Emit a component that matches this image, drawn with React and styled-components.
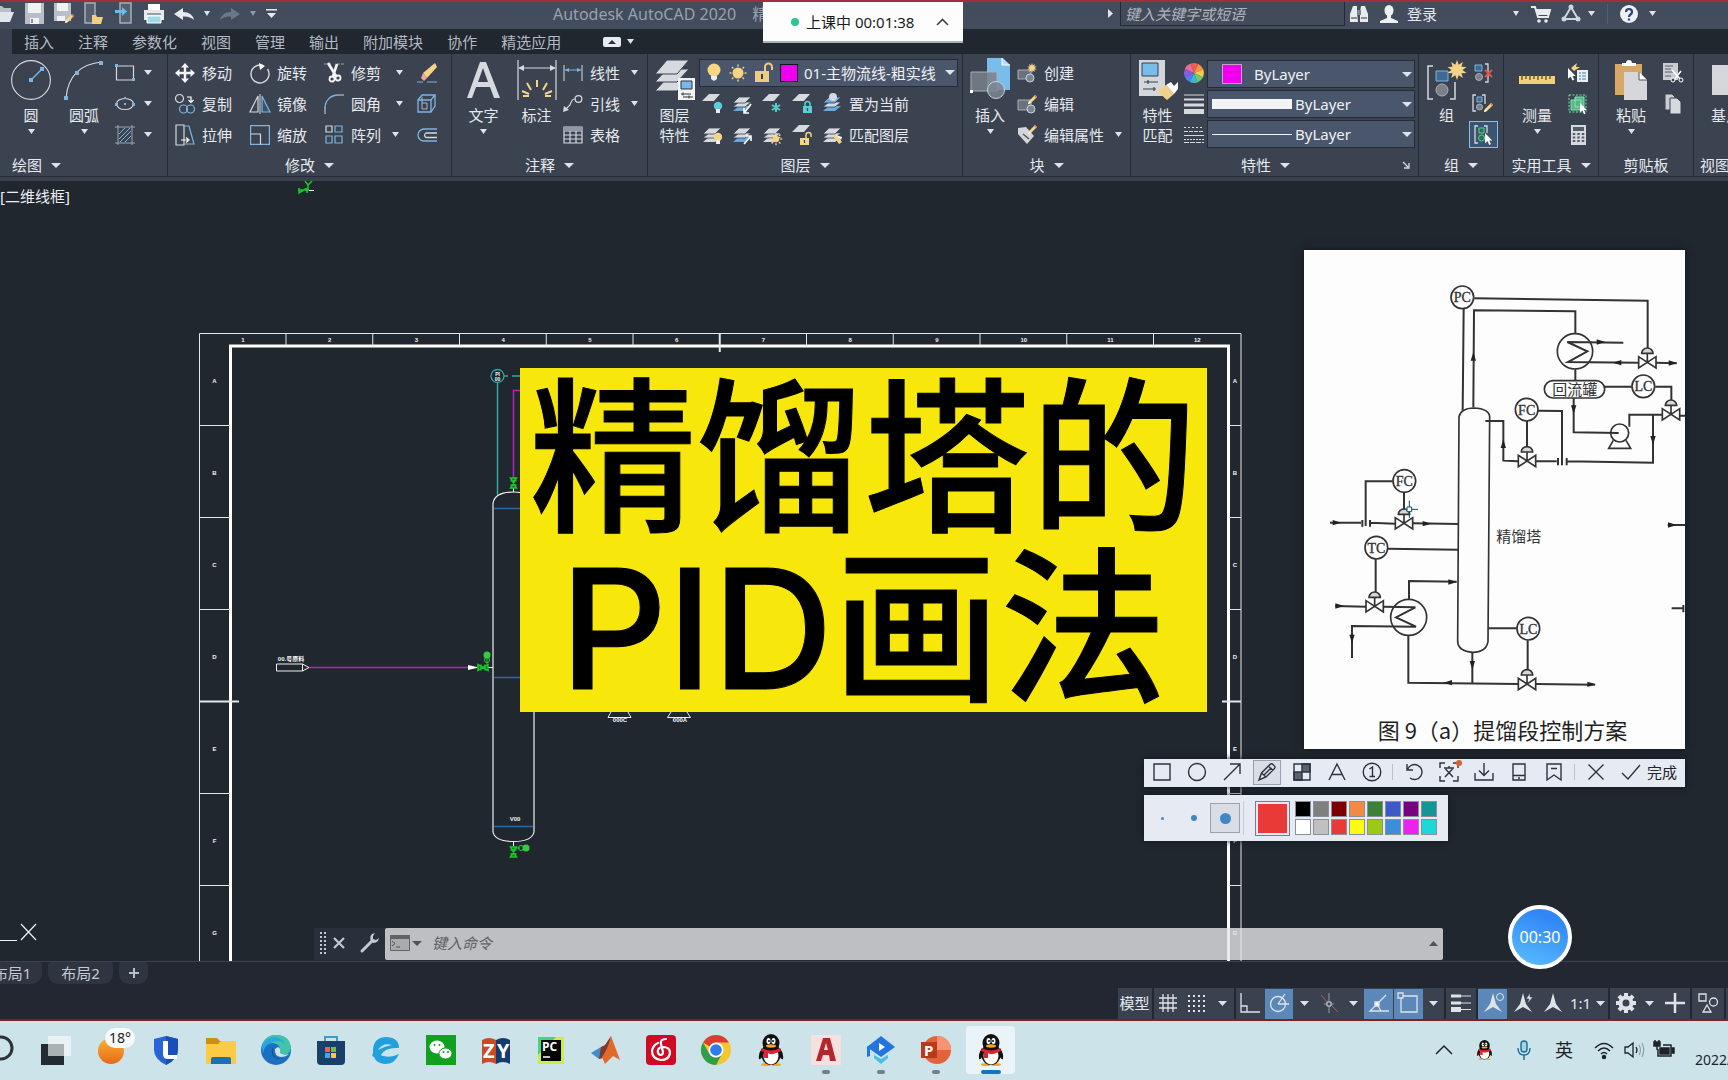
import React from "react";
import styled, { createGlobalStyle, css } from "styled-components";

const FONT = '"Noto Sans", "Noto Sans CJK SC", sans-serif';

const Global = createGlobalStyle`
  *, *::before, *::after { box-sizing: border-box; }
  body { margin: 0; background: #20272e; overflow: hidden; }
  button, input, select { font: inherit; color: inherit; margin: 0; }
  button { border: 0; padding: 0; background: none; cursor: pointer; }
  svg { display: block; flex: none; overflow: visible; }
`;

/* ---------- shell ---------- */

const Shell = styled.div`
  position: relative;
  display: flex;
  flex-direction: column;
  height: 100vh;
  overflow: hidden;
  font-family: ${FONT};
  font-size: 15px;
  line-height: 20px;
  color: #e6e9ee;
  white-space: nowrap;
`;

const Icon = ({ w = 20, h = 20, box, children, ...rest }) => (
  <svg width={w} height={h} viewBox={box || `0 0 ${w} ${h}`} fill="none" aria-hidden="true" {...rest}>
    {children}
  </svg>
);

const Caret = ({ w = 7, fill = "#dfe3ea", up }) => (
  <Icon w={w} h={5} box="0 0 8 5" preserveAspectRatio="none">
    <path d={up ? "M0 5H8L4 0Z" : "M0 0H8L4 5Z"} fill={fill} />
  </Icon>
);

/* ---------- title bar ---------- */

const TitleBar = styled.header`
  display: flex;
  align-items: center;
  flex: none;
  height: 29px;
  padding-bottom: 4px;
  border-top: 2px solid #9e2f3c;
  background: linear-gradient(#434b5c, #424d5e);
  overflow: hidden;
`;

const QuickAccess = styled.div`
  display: flex;
  align-items: center;
  gap: 10px;
  margin-left: -6px;
  button { display: flex; }
`;

const DocTitle = styled.div`
  flex: 1;
  display: flex;
  gap: 16px;
  padding-left: 276px;
  font-size: 16px;
  color: #99a1ae;
  overflow: hidden;
`;

const TitleTools = styled.div`
  display: flex;
  align-items: center;
  padding-right: 72px;
`;

const Tool = styled.button`
  display: flex;
  align-items: center;
  gap: 8px;
  margin-left: ${(p) => p.$gap || 0}px;
`;

const Search = styled.input`
  width: 225px;
  height: 25px;
  margin-left: 7px;
  padding: 0 4px;
  border: 1px solid #232a34;
  background: #434b5a;
  font-style: italic;
  outline: 0;
  &::placeholder { color: #aeb4bf; opacity: 1; }
`;

const Rule = styled.span`
  width: 1px;
  height: ${(p) => p.$h}px;
  margin-left: ${(p) => p.$gap || 0}px;
  background: ${(p) => p.$color};
`;

const ClassTimer = styled.button`
  position: absolute;
  z-index: 5;
  top: 1px;
  left: calc(50% - 101px);
  display: flex;
  align-items: center;
  width: 200px;
  height: 42px;
  padding: 0 14px 0 28px;
  border-top: 1px solid #c9201d;
  border-bottom: 2px solid #a9b1b8;
  background: #fdfdfd;
  color: #1c1c1c;
  svg { margin-left: auto; }
`;

const LiveDot = styled.span`
  width: 8px;
  height: 8px;
  margin-right: 7px;
  border-radius: 50%;
  background: #2fc48d;
`;

/* ---------- ribbon ---------- */

const TabBar = styled.nav`
  display: flex;
  align-items: stretch;
  flex: none;
  height: 25px;
  background: #20272f;
`;

const Tab = styled.button`
  padding: 0 12px;
  color: #b3bac3;
  ${(p) => p.$active && css`
    margin-left: -42px;
    background: #3b4350;
  `}
`;

const RibbonToggle = styled.button`
  display: flex;
  align-items: center;
  gap: 6px;
  margin-left: 30px;
`;

const Ribbon = styled.section`
  display: flex;
  flex: none;
  height: 127px;
  background: #3b4350;
  border-bottom: 4px solid #3a404e;
  overflow: hidden;
`;

const PanelBox = styled.div`
  flex: none;
  display: flex;
  flex-direction: column;
  width: ${(p) => p.$w}px;
  border-right: 1px solid #262d38;
  border-bottom: 1px solid #262d38;
`;

const PanelBody = styled.div`
  display: flex;
  height: 97px;
  padding: 3px 0 0 ${(p) => p.$pad}px;
`;

const PanelTitle = styled.div`
  display: flex;
  align-items: center;
  justify-content: ${(p) => (p.$start ? "flex-start" : "center")};
  flex: 1;
  gap: 9px;
  padding: 3px 0 0 ${(p) => p.$start || 0}px;
  button { margin: 0 8px 0 auto; }
`;

const Panel = ({ w, pad = 0, title, start, caret = true, launcher, children }) => (
  <PanelBox $w={w}>
    <PanelBody $pad={pad}>{children}</PanelBody>
    <PanelTitle $start={start}>
      {title}
      {caret && <Caret w={10} />}
      {launcher}
    </PanelTitle>
  </PanelBox>
);

const BigTool = styled.button`
  display: flex;
  flex: none;
  flex-direction: column;
  align-items: center;
  width: ${(p) => p.$w}px;
  margin-left: ${(p) => p.$shift || 0}px;
  padding-top: 3px;
  line-height: 20px;
  svg + span { margin-top: 5px; }
  span + svg { margin-top: 4px; }
`;

const Stack = styled.div`
  display: grid;
  flex: none;
  grid-template-rows: repeat(3, 31px);
  align-items: center;
  align-content: start;
  width: ${(p) => p.$w || "auto"};
`;

const RowTool = styled.button`
  display: flex;
  align-items: center;
  gap: 7px;
  > span + svg { margin-left: ${(p) => p.$far || 4}px; }
`;

const ToolRow = styled.div`
  display: flex;
  align-items: center;
  gap: 10px;
  padding-left: 3px;
  button { display: flex; align-items: center; gap: 7px; }
`;

const PickedTool = styled.button`
  display: flex;
  align-items: center;
  justify-content: center;
  width: 29px;
  height: 27px;
  margin-left: -5px;
  border: 1px solid #86bfec;
  background: #3c5470;
`;

const Combo = styled.label`
  display: flex;
  align-items: center;
  gap: ${(p) => p.$gap || 8}px;
  width: ${(p) => p.$w}px;
  height: 28px;
  padding: 0 2px 0 ${(p) => p.$pad || 6}px;
  border: 1px solid #252c38;
  background: #4a566b;
`;

const Select = styled.select`
  flex: 1;
  min-width: 0;
  padding: 0;
  border: 0;
  outline: 0;
  appearance: none;
  background: transparent;
  color: #eef1f5;
`;

const ColorChip = styled.span`
  flex: none;
  width: ${(p) => p.$s}px;
  height: ${(p) => p.$s}px;
  border: 1px solid ${(p) => p.$edge};
  background: #ef00ef;
`;

const LineSample = styled.span`
  flex: none;
  width: 80px;
  height: ${(p) => p.$h}px;
  background: #f4f4f7;
`;

const ComboStack = styled.div`
  display: flex;
  flex-direction: column;
  gap: 2px;
  padding: 3px 0 0 3px;
`;

const B = "#7fb4e2";
const G = "#d6d9de";
const Y = "#f5d488";

/* ----- ribbon glyphs ----- */

const sheets = (c1 = G, c2 = G, c3 = G) => (
  <>
    <path d="M7 12H19L13 17H1Z" fill={c3} />
    <path d="M7 8H19L13 13H1Z" fill={c2} stroke="#3b4350" strokeWidth=".8" />
    <path d="M7 3H19L13 9H1Z" fill={c1} stroke="#3b4350" strokeWidth=".8" />
  </>
);
const oneSheet = <path d="M7 0H18L12 7H0Z" fill={G} />;
const bulb = (x, y, c) => (
  <>
    <circle cx={x} cy={y} r="4.2" fill={c} />
    <path d={`M${x - 2} ${y + 3}H${x + 2}V${y + 7}H${x - 2}Z`} fill="#eee" />
  </>
);
const padlock = (x, y, c, open) => (
  <>
    <path
      d={open ? `M${x + 6} ${y + 4}V${y + 1}A2.5 2.5 0 0 1 ${x + 11} ${y + 1}V${y + 3}` : `M${x + 2} ${y + 5}V${y + 2}A2.5 2.5 0 0 1 ${x + 7} ${y + 2}V${y + 5}`}
      stroke={c}
      strokeWidth="1.5"
    />
    <path d={`M${x} ${y + 4}H${x + 9}V${y + 11}H${x}Z`} fill={c} />
    <path d={`M${x + 4.5} ${y + 6}V${y + 9}`} stroke="#3b4350" strokeWidth="1.2" />
  </>
);
const sun = (x, y, r) => (
  <>
    <circle cx={x} cy={y} r={r} fill={Y} />
    {[0, 45, 90, 135, 180, 225, 270, 315].map((a) => (
      <path key={a} d={`M${x} ${y - r - 1}V${y - r - 3}`} stroke={Y} strokeWidth="1.4" transform={`rotate(${a} ${x} ${y})`} />
    ))}
  </>
);
const burst = (x, y, r) => {
  const pts = Array.from({ length: 20 }, (_, i) => {
    const q = i % 2 ? r * 0.55 : r;
    const a = (i * Math.PI) / 10;
    return `${x + q * Math.sin(a)},${y - q * Math.cos(a)}`;
  }).join(" ");
  return <polygon points={pts} fill={Y} />;
};
const pencilTip = (x, y) => (
  <g transform={`translate(${x} ${y})`}>
    <path d="M0 9L1 6L7 0L9 2L3 8Z" fill={Y} />
    <path d="M6 1L7 0L9 2L8 3Z" fill="#e8794b" />
    <path d="M0 9L1 6L3 8Z" fill="#fff" />
  </g>
);
const cursor = (x, y, s = 1) => (
  <path transform={`translate(${x} ${y}) scale(${s})`} d="M0 0V12L3 9.5L5 14L7 13L5 8.8H8.5Z" fill="#fff" />
);

const g = {
  move: <Icon><path d="M10 0L14 4.5H11.2V8.8H15.5V6L20 10L15.5 14V11.2H11.2V15.5H14L10 20L6 15.5H8.8V11.2H4.5V14L0 10L4.5 6V8.8H8.8V4.5H6Z" fill="#f2f4f6" /></Icon>,
  rotate: <Icon><path d="M13 2.5A9 9 0 1 0 17.5 6" stroke={G} strokeWidth="1.4" /><path d="M9 0L15 3L10 7Z" fill="#fff" /></Icon>,
  trim: <Icon><path d="M0 1H7M13 1H20" stroke="#97a1b0" strokeDasharray="3 1" /><path d="M4 0L12 13M13 1L9 13" stroke="#f4f4f4" strokeWidth="2.6" /><circle cx="8" cy="16" r="2.5" stroke="#f4f4f4" strokeWidth="1.8" /><circle cx="14" cy="15" r="2.5" stroke="#f4f4f4" strokeWidth="1.8" /></Icon>,
  erase: <Icon><path d="M6 10L18 0L20 4L10 15Z" fill={Y} /><path d="M6 10L10 15L7 18L4 15Z" fill="#f2a6a2" /><path d="M0 19H6M10 19H20" stroke={B} /></Icon>,
  copy: <Icon><circle cx="4.5" cy="4.5" r="4" stroke={G} strokeWidth="1.2" /><path d="M12 3H16V7M13.5 6L16 8.5L18.5 6" stroke="#fff" strokeWidth="1.2" /><circle cx="8.5" cy="15" r="4" stroke={B} strokeWidth="1.2" /><circle cx="15.5" cy="15" r="4" stroke={B} strokeWidth="1.2" /></Icon>,
  mirror: <Icon><path d="M8 2V18H0Z" stroke={G} strokeWidth="1.2" /><path d="M10 0V20" stroke={G} /><path d="M12 2V18H20Z" stroke={B} strokeWidth="1.2" fill="#38546f" /></Icon>,
  fillet: <Icon><path d="M1 20V13" stroke={G} /><path d="M1 14A13 13 0 0 1 13 1" stroke={B} strokeWidth="1.3" /><path d="M13 1H20" stroke={G} /></Icon>,
  explode: <Icon><path d="M1 6H14V18H1ZM1 6L5 1H18L14 6M18 1V12L14 18" stroke={B} strokeWidth="1.3" /><path d="M5 9H10V15H5ZM5 9V3" stroke="#9db8d2" /></Icon>,
  stretch: <Icon><path d="M1 0H9V20H1Z" stroke={G} strokeWidth="1.2" /><path d="M9 1H14L19 19H10" stroke={B} strokeWidth="1.2" /><path d="M6 15H13M11 12.5L14 15L11 17.5" stroke="#fff" strokeWidth="1.2" /></Icon>,
  scale: <Icon><path d="M.6.6H19.4V19.4H.6Z" stroke={B} strokeWidth="1.2" /><path d="M.6 9H10.5V19.4" stroke={G} strokeWidth="1.2" /></Icon>,
  array: <Icon><path d="M2 1H8V7H2Z" stroke={G} strokeWidth="1.2" /><path d="M11 1H18V7H11Z M2 11H8V18H2Z M11 11H18V18H11Z" stroke={B} strokeWidth="1.2" /></Icon>,
  offset: <Icon><path d="M20 4H7A6 6 0 0 0 7 16H20" stroke={B} strokeWidth="1.3" /><path d="M20 8H9A2.5 2.5 0 0 0 9 12.5H20" stroke={G} strokeWidth="1.3" /></Icon>,
  circle: <Icon w={40} h={40}><circle cx="20" cy="20" r="19.4" stroke={G} strokeWidth="1.1" /><path d="M20 20L31 9" stroke={B} strokeWidth="1.4" /><path d="M18 18h4v4h-4zM29 7h4v4h-4z" fill={B} /></Icon>,
  arc: <Icon w={40} h={40}><path d="M2 38C4 16 16 4 38 2" stroke={G} strokeWidth="1.2" /><path d="M0 36h4v4h-4zM11 11h4v4h-4zM35 1h4v4h-4z" fill={B} /></Icon>,
  rect: <Icon><path d="M1.5 3H18.5V17H1.5Z" stroke={G} strokeWidth="1.2" /><path d="M0 1h3v3H0zM17 15h3v3h-3z" fill={B} /></Icon>,
  ellipse: <Icon><ellipse cx="10" cy="10" rx="8.5" ry="5.5" stroke={G} strokeWidth="1.2" /><path d="M9 9h2v2H9zM0 9h3v3H0zM17 9h3v3h-3zM9 3h2v2H9z" fill={B} /></Icon>,
  hatch: <Icon><path d="M3 0V20M17 0V20M0 2H20M0 18H20" stroke="#9aa3b0" /><path d="M4 9L10 3M4 14L15 3M5 17L16 6M10 17L16 11" stroke={B} /></Icon>,
  text: <Icon w={40} h={40}><path d="M3 38L16 2H22L36 38H30L26 27H12L8 38ZM14 22H24L19 8Z" fill={G} /></Icon>,
  dim: <Icon w={40} h={40}><path d="M1 0V40M39 0V40M2 8H38" stroke={G} strokeWidth="1.2" /><path d="M1 8L7 5V11ZM39 8L33 5V11Z" fill={G} /><path d="M20 20V27M10 23L14 30M30 23L26 30M5 31L12 34M35 31L28 34M6 36H12M28 36H34" stroke={Y} strokeWidth="2" /></Icon>,
  linear: <Icon><path d="M1 2V18M19 2V18" stroke={G} /><path d="M2 7H18" stroke={B} /><path d="M2 7L6 5V9ZM18 7L14 5V9Z" fill={B} /></Icon>,
  leader: <Icon><circle cx="15.5" cy="5" r="3.4" stroke={G} strokeWidth="1.2" /><path d="M12 5C8 5 8 9 7 11L3 15" stroke={G} strokeWidth="1.2" /><path d="M0 18L1 12L6 16Z" fill={G} /></Icon>,
  table: <Icon><path d="M1 2H19V18H1ZM1 6H19M1 10H19M1 14H19M7 6V18M13 6V18" stroke={G} strokeWidth="1.2" /><path d="M1 2H19V6H1Z" fill="#8f98a6" /></Icon>,
  layerProps: <Icon w={40} h={40}><path d="M12 18H34L22 31H0Z" fill={G} stroke="#3b4350" /><path d="M12 9H34L22 22H0Z" fill={G} stroke="#3b4350" /><path d="M12 0H34L22 14H0Z" fill={G} stroke="#3b4350" /><path d="M23 18H40V40H23Z" fill="#f2f3f5" /><path d="M26 21H37V29H26Z" fill="#79b8ea" stroke="#2b3441" /><path d="M26 34H36M28 37H38M28 32.500V35.500M34 35.500V38.500" stroke="#333" /></Icon>,
  bulb: <Icon w={16}><circle cx="8" cy="7" r="6.500" fill="#f9d67f" /><path d="M5 13H11V16L8 18L5 16Z" fill="#eee" /></Icon>,
  sun: <Icon>{sun(10, 10, 5.5)}</Icon>,
  unlock: <Icon><path d="M11 9V4A3.500 3.500 0 0 1 18 4V7" stroke="#eccb83" strokeWidth="2" /><path d="M1 8H15V19H1Z" fill="#eccb83" /><path d="M8 11V16" stroke="#3b4350" strokeWidth="2" /></Icon>,
  lOff: <Icon>{oneSheet}{bulb(16, 12, "#59cfdc")}</Icon>,
  lIso: <Icon>{sheets(G, G, "#68a9e0")}<path d="M19 10L13 18M12 14V19H17" stroke="#fff" strokeWidth="1.6" /></Icon>,
  lFreeze: <Icon>{oneSheet}<path d="M14 9V18M10 11L18 16M18 11L10 16" stroke="#54cdc6" strokeWidth="2" /></Icon>,
  lLock: <Icon>{oneSheet}{padlock(11, 8, "#59cfdc")}</Icon>,
  lCurrent: <Icon>{sheets("#68a9e0", G, "#68a9e0")}<circle cx="11" cy="3" r="4" fill={G} /></Icon>,
  lOn: <Icon>{sheets()}{bulb(16, 12, Y)}</Icon>,
  lUniso: <Icon>{sheets(G, G, "#68a9e0")}<path d="M12 19L19 11M14 11H19V16" stroke="#fff" strokeWidth="1.6" /></Icon>,
  lThaw: <Icon>{sheets()}{sun(14, 14, 3.2)}</Icon>,
  lUnlock: <Icon>{oneSheet}{padlock(8, 9, Y, true)}</Icon>,
  lMatch: <Icon>{sheets()}<path d="M11 11L14 9L20 17L17 19Z" fill={Y} /><path d="M14 10L19 15L20 12Z" fill="#fff" /></Icon>,
  insert: <Icon w={40} h={40}><path d="M17 -2H33L40 5V30H17Z" fill="#79bdea" /><path d="M32 -2V5H40" stroke="#fff" fill="#b4def8" /><path d="M1 12H27V31H1Z" fill="#7b8089" stroke="#aab0b9" fillOpacity=".85" /><circle cx="26" cy="30" r="8.500" fill="#7b8694" fillOpacity=".85" stroke="#ccd1d8" /><path d="M0 30h3v3H0z" fill="#fff" /></Icon>,
  create: <Icon><path d="M1 7H14V16H1Z" fill="#6c727c" stroke="#aab0b9" /><circle cx="13" cy="15" r="4" fill="#7b8694" stroke="#ccd1d8" />{burst(15, 5, 5)}</Icon>,
  edit: <Icon><path d="M1 6H14V16H1Z" fill="#6c727c" stroke="#aab0b9" /><circle cx="14" cy="15" r="4" fill="#7b8694" stroke="#ccd1d8" />{pencilTip(11, 1)}</Icon>,
  attr: <Icon><path d="M1 3L9 2L17 11L10 19L1 9Z" fill="#d4d6da" /><path d="M6 9L12 14" stroke="#555" strokeWidth="1.5" />{pencilTip(11, 0)}</Icon>,
  match: <Icon w={40} h={40}><path d="M1 0H27V36H1Z" fill="#d3d6da" /><path d="M4 3H20V16H4Z" fill="#79bdea" stroke="#39414e" /><path d="M6 22H20M5 29H18M10 20V24M16 27V31" stroke="#39414e" strokeWidth="1.2" /><path d="M19 31L28 25L36 34L29 40Z" fill="#f2d08a" /><path d="M28 25L33 22L36 26L40 22L40 29L36 34Z" fill="#fff" /></Icon>,
  wheel: (
    <Icon>
      {["#f05a4f", "#f79448", "#f6cb4f", "#6ecb72", "#46b4c9", "#4f7ff0", "#8d5bd9", "#ea6e98"].map((c, i) => (
        <path key={c} d="M10 10L10 0A10 10 0 0 1 17.070 2.930Z" fill={c} transform={`rotate(${i * 45 - 20} 10 10)`} />
      ))}
    </Icon>
  ),
  weights: <Icon><path d="M0 1H20" stroke={G} /><path d="M0 5.500H20" stroke={G} strokeWidth="2" /><path d="M0 11H20" stroke={G} strokeWidth="3" /><path d="M0 17.500H20" stroke={G} strokeWidth="5" /></Icon>,
  types: <Icon><path d="M0 2.500H20" stroke={G} strokeDasharray="2 2" /><path d="M0 6.500H20" stroke={G} strokeDasharray="4 1" /><path d="M0 10.500H20" stroke={G} /><path d="M0 14.500H20" stroke={G} strokeDasharray="2 1" /><path d="M0 17.500H20" stroke={G} strokeDasharray="5 1" /></Icon>,
  group: <Icon w={40} h={40}><path d="M6 6H1V39H6M23 39H28V22" stroke={G} strokeWidth="1.500" /><path d="M9 11H21V21H9Z" fill="#3f6a93" stroke={B} /><circle cx="15" cy="30" r="6" fill="#7b8089" stroke="#aab0b9" />{burst(30, 10, 10)}</Icon>,
  ungroup: <Icon><path d="M1 2H8V8H1Z" fill="#3f6a93" stroke={B} /><circle cx="5" cy="14" r="3.500" fill="#7b8089" stroke="#aab0b9" /><path d="M11 1H14V19H11" stroke={G} strokeWidth="1.300" /><path d="M11 7L18 14M18 7L11 14" stroke="#e05146" strokeWidth="2" /></Icon>,
  groupEdit: <Icon><path d="M2 1H-1V17H2M8 1H11V10" stroke={G} strokeWidth="1.300" /><path d="M3 3H8V8H3Z" fill="#3f6a93" stroke={B} /><circle cx="5.500" cy="13" r="3" fill="#7b8089" stroke="#aab0b9" />{pencilTip(10, 9)}</Icon>,
  groupSel: <Icon><path d="M4 1H1V18H4M10 1H13V8" stroke={G} strokeWidth="1.300" /><path d="M5 3H10V8H5Z" fill="#2e6e54" stroke="#5bd08d" /><circle cx="7.500" cy="13" r="3" fill="#2e6e54" stroke="#5bd08d" />{cursor(11, 8, 0.85)}</Icon>,
  ruler: <Icon w={40} h={40}><path d="M2 16H38V24H2Z" fill="#f4cf7b" /><path d="M5 16V20M9 16V19M13 16V20M17 16V19M21 16V20M25 16V19M29 16V20M33 16V19" stroke="#4a4335" strokeWidth="1.200" /></Icon>,
  quick: <Icon><path d="M9 7H20V19H9Z" fill="#edf0f4" /><path d="M11 10H13M11 13H13M11 16H13" stroke="#3a7cb8" /><path d="M14 10H18M14 13H18M14 16H18" stroke="#3a7cb8" /><path d="M3 5L9 0L8 4H12L6 8Z" fill={Y} />{cursor(0, 5, 0.9)}</Icon>,
  selAll: <Icon><path d="M1 1H18V18H1Z" stroke="#74e6ae" strokeDasharray="2 1.500" /><path d="M3 6H13V16H3Z M7 3H16V13H7Z" fill="#54b684" stroke="#88e6b4" />{cursor(12, 9, 0.8)}</Icon>,
  calc: <Icon><path d="M3 0H18V20H3Z" fill={G} /><path d="M5 2H16V6H5Z" fill="#555d69" /><path d="M6 8v10M10.500 8v10M15 8v10" stroke="#555d69" strokeWidth="2.500" strokeDasharray="2 1.500" /></Icon>,
  paste: <Icon w={40} h={40}><path d="M4 4H31V35H4Z" fill="#d9a866" /><path d="M11 6V3H15C15 -1 21 -1 21 3H25V6Z" fill="#fff" /><path d="M13 12H28L36 20V40H13Z" fill="#d6d7da" /><path d="M28 12V20H36" fill="#fff" stroke="#555" /></Icon>,
  cut: <Icon><path d="M0 0H15V17H0Z" fill="#c9ccd1" /><path d="M2 3H10M2 6H8M2 9H10M2 13H8" stroke="#555d69" /><path d="M9 7L18 17M18 8L11 17" stroke="#fff" strokeWidth="1.600" /><circle cx="10" cy="17" r="2" stroke="#fff" fill="#3b4350" /><circle cx="18" cy="17" r="2" stroke="#fff" fill="#3b4350" /></Icon>,
  pages: <Icon><path d="M2 0H9L12 3V16H2Z" fill="#c9ccd1" stroke="#3b4350" /><path d="M7 4H14L18 8V20H7Z" fill={G} stroke="#3b4350" /></Icon>,
  base: <Icon w={40} h={40}><path d="M6 5H40V35H6Z" fill="#d6d7da" /></Icon>,
};

const RibbonPanels = () => (
  <Ribbon>
    <Panel w={168} title="绘图" start={12}>
      <BigTool $w={30} $shift={-27}>
        <Icon w={40} h={40}><circle cx="2" cy="20" r="26" stroke={G} /></Icon>
        <span>线</span>
      </BigTool>
      <BigTool $w={56}>{g.circle}<span>圆</span><Caret /></BigTool>
      <BigTool $w={50}>{g.arc}<span>圆弧</span><Caret /></BigTool>
      <Stack>
        <DrawTool aria-label="矩形">{g.rect}<Caret w={8} /></DrawTool>
        <DrawTool aria-label="椭圆">{g.ellipse}<Caret w={8} /></DrawTool>
        <DrawTool aria-label="填充">{g.hatch}<Caret w={8} /></DrawTool>
      </Stack>
    </Panel>

    <Panel w={284} pad={7} title="修改">
      <Stack $w="75px">
        <RowTool>{g.move}<span>移动</span></RowTool>
        <RowTool>{g.copy}<span>复制</span></RowTool>
        <RowTool>{g.stretch}<span>拉伸</span></RowTool>
      </Stack>
      <Stack $w="74px">
        <RowTool>{g.rotate}<span>旋转</span></RowTool>
        <RowTool>{g.mirror}<span>镜像</span></RowTool>
        <RowTool>{g.scale}<span>缩放</span></RowTool>
      </Stack>
      <Stack $w="93px">
        <RowTool $far={8}>{g.trim}<span>修剪</span><Caret /></RowTool>
        <RowTool $far={8}>{g.fillet}<span>圆角</span><Caret /></RowTool>
        <RowTool>{g.array}<span>阵列</span><Caret /></RowTool>
      </Stack>
      <Stack>
        <RowTool aria-label="删除">{g.erase}</RowTool>
        <RowTool aria-label="分解">{g.explode}</RowTool>
        <RowTool aria-label="偏移">{g.offset}</RowTool>
      </Stack>
    </Panel>

    <Panel w={196} pad={5} title="注释">
      <BigTool $w={53}>{g.text}<span>文字</span><Caret /></BigTool>
      <BigTool $w={53}>{g.dim}<span>标注</span></BigTool>
      <Stack $w="80px">
        <RowTool>{g.linear}<span>线性</span><Caret /></RowTool>
        <RowTool>{g.leader}<span>引线</span><Caret /></RowTool>
        <RowTool>{g.table}<span>表格</span></RowTool>
      </Stack>
    </Panel>

    <Panel w={315} pad={2} title="图层">
      <BigTool $w={49}>{g.layerProps}<span>图层<br />特性</span></BigTool>
      <Stack>
        <Combo $w={259} $gap={6}>
          {g.bulb}{g.sun}{g.unlock}
          <ColorChip $s={18} $edge="#10161f" />
          <Select aria-label="图层"><option>01-主物流线-粗实线</option></Select>
          <Caret w={10} />
        </Combo>
        <ToolRow>
          {["lOff", "lIso", "lFreeze", "lLock"].map((k) => <button key={k} aria-label={k}>{g[k]}</button>)}
          <button>{g.lCurrent}<span>置为当前</span></button>
        </ToolRow>
        <ToolRow>
          {["lOn", "lUniso", "lThaw", "lUnlock"].map((k) => <button key={k} aria-label={k}>{g[k]}</button>)}
          <button>{g.lMatch}<span>匹配图层</span></button>
        </ToolRow>
      </Stack>
    </Panel>

    <Panel w={168} title="块">
      <BigTool $w={54}>{g.insert}<span>插入</span><Caret /></BigTool>
      <Stack>
        <RowTool>{g.create}<span>创建</span></RowTool>
        <RowTool>{g.edit}<span>编辑</span></RowTool>
        <RowTool>{g.attr}<span>编辑属性</span><Caret /></RowTool>
      </Stack>
    </Panel>

    <Panel
      w={288}
      title="特性"
      start={110}
      launcher={<button aria-label="特性设置"><Icon w={7} h={7}><path d="M0 0L5 5M6 1V6H1" stroke={G} strokeWidth="1.300" /></Icon></button>}
    >
      <BigTool $w={53}>{g.match}<span>特性<br />匹配</span></BigTool>
      <Stack>
        {g.wheel}
        {g.weights}
        {g.types}
      </Stack>
      <ComboStack>
        <Combo $w={208} $pad={14} $gap={12}>
          <ColorChip $s={20} $edge="#cf9ad6" />
          <Select aria-label="颜色"><option>ByLayer</option></Select>
          <Caret w={10} />
        </Combo>
        <Combo $w={208} $pad={4} $gap={3}>
          <LineSample $h={10} />
          <Select aria-label="线宽"><option>ByLayer</option></Select>
          <Caret w={10} />
        </Combo>
        <Combo $w={208} $pad={4} $gap={3}>
          <LineSample $h={1} />
          <Select aria-label="线型"><option>ByLayer</option></Select>
          <Caret w={10} />
        </Combo>
      </ComboStack>
    </Panel>

    <Panel w={85} title="组">
      <BigTool $w={55}>{g.group}<span>组</span></BigTool>
      <Stack>
        <RowTool aria-label="解除编组">{g.ungroup}</RowTool>
        <RowTool aria-label="组编辑">{g.groupEdit}</RowTool>
        <PickedTool aria-label="组选择" aria-pressed="true">{g.groupSel}</PickedTool>
      </Stack>
    </Panel>

    <Panel w={95} pad={2} title="实用工具">
      <BigTool $w={62}>{g.ruler}<span>测量</span><Caret /></BigTool>
      <Stack>
        <RowTool aria-label="快速选择">{g.quick}</RowTool>
        <RowTool aria-label="全部选择">{g.selAll}</RowTool>
        <RowTool aria-label="计算器">{g.calc}</RowTool>
      </Stack>
    </Panel>

    <Panel w={95} title="剪贴板" caret={false}>
      <BigTool $w={64}>{g.paste}<span>粘贴</span><Caret /></BigTool>
      <Stack>
        <RowTool aria-label="剪切">{g.cut}</RowTool>
        <RowTool aria-label="复制">{g.pages}</RowTool>
      </Stack>
    </Panel>

    <Panel w={90} pad={10} title="视图" start={6} caret={false}>
      <BigTool $w={44}>{g.base}<span>基点</span></BigTool>
    </Panel>
  </Ribbon>
);

const DrawTool = styled.button`
  display: flex;
  align-items: center;
  gap: 9px;
  padding-left: 6px;
`;

/* ---------- drawing canvas ---------- */

const Canvas = styled.main`
  position: relative;
  flex: 1;
  min-height: 0;
  overflow: hidden;
  background: #20272e;
`;

const Sheet = styled.svg`
  position: absolute;
  top: 0;
  left: 0;
`;

const ViewLabel = styled.div`
  position: relative;
  padding-top: 5px;
  color: #eceff2;
`;

const Banner = styled.h1`
  position: absolute;
  left: 520px;
  top: 187px;
  width: 687px;
  height: 344px;
  margin: 0;
  padding-top: 5px;
  background: #f8e70a;
  color: #000;
  font-family: "Inter", "Noto Sans CJK SC", sans-serif;
  font-weight: 500;
  font-size: 167px;
  line-height: 170px;
  text-align: center;
  -webkit-text-stroke: 1px #000;
`;

const Snip = styled.div`
  position: absolute;
  top: 69px;
  right: 43px;
  display: flex;
  flex-direction: column;
  align-items: flex-end;
  color: #20242c;
`;

const Figure = styled.figure`
  display: flex;
  flex-direction: column;
  width: 381px;
  height: 499px;
  margin: 0 0 10px;
  background: #fdfdfd;
  box-shadow: 0 0 8px #12171d;
  overflow: hidden;
  figcaption {
    padding-left: 16px;
    text-align: center;
    font-size: 22px;
    line-height: 30px;
    font-family: "Noto Sans CJK SC", sans-serif;
    color: #1f1f1f;
  }
`;

const SnipBar = styled.div`
  display: flex;
  align-items: center;
  align-self: flex-start;
  height: ${(p) => p.$h}px;
  padding: ${(p) => p.$p};
  margin-bottom: 8px;
  background: #e6eaf3;
  box-shadow: 0 0 6px #12171d;
`;

const SnipTool = styled.button`
  display: flex;
  align-items: center;
  justify-content: center;
  gap: 6px;
  width: ${(p) => p.$w || 35}px;
  height: 26px;
`;

const PickBox = styled.span`
  display: flex;
  align-items: center;
  justify-content: center;
  width: ${(p) => p.$w}px;
  height: ${(p) => p.$h}px;
  border: 1px solid #9ca2ad;
  background: #d9dde5;
`;

const Dot = styled.span`
  width: ${(p) => p.$s}px;
  height: ${(p) => p.$s}px;
  border-radius: 50%;
  background: #3f87c7;
`;

const CurrentColor = styled.button`
  width: 35px;
  height: 35px;
  margin: 0 5px 0 11px;
  border: 1px solid #777c86;
  padding: 2px;
  background: #ea3a38;
  background-clip: content-box;
`;

const Palette = styled.div`
  display: grid;
  grid-template-columns: repeat(8, 16px);
  grid-auto-rows: 16px;
  gap: 2px;
`;

const Swatch = styled.button`
  border: 1px solid #8a8f98;
  background: ${(p) => p.$c};
`;

const CommandLine = styled.form`
  position: absolute;
  left: 314px;
  right: 285px;
  bottom: 1px;
  display: flex;
  align-items: stretch;
  height: 32px;
`;

const CommandGrip = styled.div`
  display: flex;
  align-items: center;
  width: 71px;
  padding: 0 0 2px 6px;
  background: #292f3b;
  button { display: flex; }
  svg + button { margin-left: 7px; }
  button + button { margin-left: 15px; }
`;

const CommandBox = styled.label`
  display: flex;
  flex: 1;
  align-items: center;
  gap: 2px;
  padding: 0 5px 2px;
  border-radius: 2px;
  background: rgba(229, 230, 232, 0.8);
  input {
    flex: 1;
    margin-left: 8px;
    padding: 0;
    border: 0;
    outline: 0;
    background: transparent;
    font-style: italic;
    &::placeholder { color: #5d6066; opacity: 1; }
  }
`;

const CountDown = styled.div`
  position: absolute;
  z-index: 4;
  right: 156px;
  bottom: 111px;
  display: flex;
  align-items: center;
  justify-content: center;
  width: 64px;
  height: 64px;
  border: 4px solid #fff;
  border-radius: 50%;
  background: linear-gradient(200deg, #3187f7 20%, #55b8fb 90%);
  color: #fff;
  font-size: 16px;
`;

const V = ({ x, y, t }) => (
  <g transform={`translate(${x} ${y})${t ? " rotate(90)" : ""}`} stroke="#19c92b" strokeWidth="1.500">
    <path d="M-5 -3V3L5 -3V3ZM-2 -3V3M2 -3V3" fill="#146e1f" />
  </g>
);

const CadSheet = () => {
  const cols = Array.from({ length: 11 }, (_, i) => 286 + i * 86.75);
  const rows = Array.from({ length: 6 }, (_, i) => 425 + i * 92);
  return (
    <Sheet width="1728" height="780" viewBox="0 181 1728 780" fill="none">
      <g stroke="#e4e7ea">
        <path d="M199.500 961V333.500H1241V961" />
        <path d="M230.500 961V346H1228.500V961" stroke="#fff" strokeWidth="3" />
        {cols.map((x, i) => <path key={x} d={`M${x} 334V${i === 5 ? 352 : 345}`} strokeWidth={i === 5 ? 2 : 1} />)}
        {rows.map((y, i) => (
          <path key={y} d={`M200 ${y}.500H${i === 3 ? 239 : 230}M${i === 3 ? 1222 : 1229} ${y}.500H1241`} strokeWidth={i === 3 ? 2 : 1} />
        ))}
      </g>
      <g fill="#f3f5f6" fontFamily="Liberation Sans, Noto Sans CJK SC, sans-serif" fontWeight="700" fontSize="6" textAnchor="middle">
        {Array.from({ length: 12 }, (_, i) => <text key={i} x={243 + i * 86.75} y="342">{i + 1}</text>)}
        {"ABCDEFG".split("").map((c, i) => (
          <React.Fragment key={c}>
            <text x="214.500" y={383 + i * 92}>{c}</text>
            <text x="1235" y={383 + i * 92}>{c}</text>
          </React.Fragment>
        ))}
        <text x="291" y="661">00.号原料</text>
        <text x="515" y="821">V00</text>
        <text x="620" y="722">000C</text>
        <text x="680" y="722">000A</text>
        <text x="497.500" y="376" fontSize="5">PI</text>
        <text x="497.500" y="381" fontSize="5">00</text>
      </g>
      <path d="M493 832V503Q495 492 513.500 492T534 503V832Q532 841.500 513.500 841.500T493 832Z" stroke="#eef0f2" strokeWidth="1.200" />
      <path d="M494 508.500H533M494 677.500H533M494 826.500H533" stroke="#2f66a8" strokeWidth="1.300" />
      <path d="M497.500 383V495M504 376H508M512 376H520" stroke="#2fa6a4" strokeWidth="1.500" />
      <circle cx="497.500" cy="376" r="6.500" stroke="#2fa6a4" strokeWidth="1.300" />
      <path d="M513.500 478V390.500H520M309 667.500H469" stroke="#b524b8" strokeWidth="1.500" />
      <path d="M276.500 664H302.500V671H276.500ZM302.500 664L309 667.500L302.500 671M488 667.500H493M513.500 488V492M513.500 841V846M611 712L608 717.500H631L628 712M671 712L667.500 717.500H690.500L687 712" stroke="#eef0f2" />
      <path d="M468 665L479 667.500L468 670Z" fill="#fff" />
      <V x={483} y={667.5} />
      <V x={513.5} y={483} t />
      <V x={513.5} y={852} t />
      <path d="M487 664V658M514 848H520" stroke="#19c92b" />
      <circle cx="487" cy="655" r="3.500" fill="#33cc3c" /><circle cx="487" cy="660" r="2.500" stroke="#33cc3c" />
      <circle cx="526" cy="848" r="3.500" fill="#33cc3c" /><circle cx="521" cy="848" r="2.500" stroke="#33cc3c" />
      <path d="M298 190H309M308 190V185M305 181L308 185L312 181M299 188V193L307 188V193" stroke="#19c92b" strokeWidth="1.500" />
      <path d="M309 190.500H314" stroke="#fff" />
      <path d="M0 940.500H17M21 924L36 940M36 924L21 940" stroke="#eef0f2" strokeWidth="1.200" />
    </Sheet>
  );
};

const Valve = ({ x, y }) => (
  <g transform={`translate(${x} ${y})`}>
    <path d="M-26 -17V17L26 -17V17ZM0 0V-26" />
    <path d="M-17 -27A17 16 0 0 1 17 -27Z" fill="#d8d8d8" />
  </g>
);
const Bubble = ({ x, y, t }) => (
  <>
    <circle cx={x} cy={y} r="34" />
    <text x={x} y={y + 15} textAnchor="middle" fill="#333" stroke="#333" strokeWidth="1">{t}</text>
  </>
);
const Tip = ({ x, y, r = 0 }) => <path d="M-12 -8L14 0L-12 8Z" fill="#222" stroke="none" transform={`translate(${x} ${y}) rotate(${r})`} />;

const ProcessDiagram = () => (
  <svg width="381" height="464" viewBox="42 30 1143 1392" fill="none" stroke="#333" strokeWidth="6" fontFamily="Liberation Serif, Noto Sans CJK SC, serif" fontSize="42">
    <path d="M503 1205L507 530Q512 505 552 504Q597 506 599 530L594 1205Q588 1237 548 1237Q505 1234 503 1205Z" strokeWidth="5" />
    <path d="M521 207L518 512M553 175L1073 182V325M550 502L552 211L856 214V281M856 386V420M586 543H640V662L684 664M738 664H800M832 664L1089 668V525M743 512L816 513V676M804 654V676M830 654V676M711 543V625M945 440H1025M1096 440H1144V480M851 475V577L986 579M1018 560V524H1117M1168 527H1185" />
    <path d="M308 724L227 724V858M217 840V860M240 840V860M120 848H213M242 848L316 851M368 850L505 852M342 758V815M293 926L505 929M257 957V1060M136 1098L228 1100M280 1100L376 1102L318 1132L378 1160L186 1158V1254M357 1078V1023L500 1025M355 1186V1328L684 1332M738 1332L915 1334M547 1239V1328M595 1165H680M713 1201V1290M1133 855H1185M1145 1105H1180M1180 1095V1117" />
    <path d="M1000 308L832 306L892 334L834 366L1045 368M1098 368L1160 370" />
    <g strokeWidth="5">
      <circle cx="855" cy="334" r="53" /><circle cx="356" cy="1132" r="54" />
      <rect x="763" y="422" width="181" height="52" rx="26" />
      <circle cx="989" cy="579" r="27" />
      <path d="M970 601L956 625H1022L1008 601" />
      <Valve x={1072} y={367} /><Valve x={1143} y={523} /><Valve x={711} y={663} />
      <Valve x={342} y={850} /><Valve x={254} y={1099} /><Valve x={711} y={1332} />
      <Bubble x={517} y={172} t="PC" /><Bubble x={1060} y={439} t="LC" /><Bubble x={710} y={509} t="FC" />
      <Bubble x={343} y={723} t="FC" /><Bubble x={259} y={923} t="TC" /><Bubble x={715} y={1166} t="LC" />
    </g>
    <g fill="#333" stroke="none">
      <text x="854" y="466" textAnchor="middle" fontSize="45">回流罐</text>
      <text x="686" y="906" textAnchor="middle" fontSize="45">精馏塔</text>
    </g>
    <Tip x={550} y={350} r={-90} /><Tip x={932} y={306} /><Tip x={982} y={368} r={180} /><Tip x={1148} y={369} />
    <Tip x={851} y={508} r={90} /><Tip x={1089} y={600} r={90} /><Tip x={640} y={612} r={-90} />
    <Tip x={140} y={848} /><Tip x={410} y={851} /><Tip x={148} y={1098} /><Tip x={487} y={1026} />
    <Tip x={186} y={1196} r={90} /><Tip x={547} y={1275} r={90} /><Tip x={474} y={1328} r={180} /><Tip x={904} y={1333} /><Tip x={1146} y={855} />
    <path d="M333 808H384M358 782V834" stroke="#174f63" strokeWidth="3" />
    <path d="M351 801H365V815H351Z" fill="#fff" stroke="#174f63" strokeWidth="3" />
  </svg>
);

const INK = { stroke: "#2c3340", strokeWidth: 1.4 };
const SNIP_TOOLS = [
  ["矩形", <path d="M2 2H18V18H2Z" />],
  ["椭圆", <circle cx="10" cy="10" r="8.500" />],
  ["箭头", <path d="M2 18L18 2M8 2H18V12" />],
  ["画笔", <path d="M2 18L4.500 11L13 2.500Q14.500 1 16.500 3Q19 5 17.500 6.500L9 15ZM4.500 11L9 15M11.500 4L16 8.500M7 13L14 6" />],
  ["马赛克", <><path d="M2 2H18V18H2Z" /><path d="M10 2H18V10H10ZM2 10H10V18H2Z" fill="#2c3340" fillOpacity=".75" /></>],
  ["文字", <path d="M2 18L10 2L18 18M5 12.500H15" />],
  ["序号", <><circle cx="10" cy="10" r="8.800" /><path d="M7.500 7L10.500 5V14.500M7.500 14.500H13" /></>],
  null,
  ["撤销", <path d="M3 2V8H9M3.500 7.500A7.500 7.500 0 1 1 6 16" />],
  ["识别", <><path d="M1 6V1H6M14 1H19V6M19 14V19H14M6 19H1V14" /><path d="M5 6H15M10 4V6M6 15L13.500 7M6.500 7L14 15" /><circle cx="20" cy="1" r="3" fill="#d9602f" stroke="none" /></>],
  ["下载", <path d="M1 11V18H19V11M10 1V13M5 8.500L10 13.500L15 8.500" />],
  ["手机", <path d="M4 2H16V18H4ZM4 13.500H16M9 16H11" />],
  ["收藏", <path d="M3 2H17V18L10 13L3 18ZM7 6.500H13" />],
  null,
  ["关闭", <path d="M2.500 2.500L17.500 17.500M17.500 2.500L2.500 17.500" />],
];
const COLORS = ["#000", "#7f7f7f", "#7b0000", "#f08a45", "#3a8238", "#3c5bc8", "#7b0080", "#159595", "#fff", "#c0c0c0", "#ea3a38", "#fbfb14", "#9aca14", "#3c8edb", "#ee22ee", "#1dd8d8"];

const SnipOverlay = () => (
  <Snip>
    <Figure>
      <ProcessDiagram />
      <figcaption>图 9（a）提馏段控制方案</figcaption>
    </Figure>
    <SnipBar $h={28} $p="0 0 2px">
      {SNIP_TOOLS.map((t, i) =>
        t ? (
          <SnipTool key={t[0]} aria-label={t[0]}>
            {t[0] === "画笔" ? (
              <PickBox $w={28} $h={25}><Icon {...INK}>{t[1]}</Icon></PickBox>
            ) : (
              <Icon {...INK}>{t[1]}</Icon>
            )}
          </SnipTool>
        ) : (
          <Separator key={i} />
        )
      )}
      <SnipTool $w={72}>
        <Icon {...INK}><path d="M1 11L7 17L19 3" /></Icon>完成
      </SnipTool>
    </SnipBar>
    <SnipBar $h={46} $p="0 11px 0 2px">
      <SnipTool $w={32} aria-label="细"><Dot $s={3} /></SnipTool>
      <SnipTool $w={32} aria-label="中"><Dot $s={6} /></SnipTool>
      <SnipTool $w={30} aria-label="粗" aria-pressed="true"><PickBox $w={30} $h={30}><Dot $s={11} /></PickBox></SnipTool>
      <Rule $h={34} $gap={3} $color="#c5cad4" />
      <CurrentColor aria-label="当前颜色" />
      <Palette>{COLORS.map((c) => <Swatch key={c} $c={c} aria-label={c} />)}</Palette>
    </SnipBar>
  </Snip>
);

const Separator = styled.span`
  width: 1px;
  height: 16px;
  margin: 0 3px;
  background: #bcc2cd;
`;

/* ---------- status strip ---------- */

const StatusStrip = styled.footer`
  display: flex;
  justify-content: space-between;
  flex: none;
  height: 58px;
  border-top: 1px solid #3c424e;
  background: #222731;
`;

const LayoutTabs = styled.div`
  display: flex;
  align-items: flex-start;
  gap: 6px;
`;

const LayoutTab = styled.button`
  display: flex;
  align-items: center;
  justify-content: center;
  height: 22px;
  width: ${(p) => p.$w}px;
  margin-left: ${(p) => p.$shift || 0}px;
  border-radius: 3px 3px 10px 10px;
  background: #2e3440;
  color: #c5cad2;
`;

const StatusBar = styled.div`
  display: flex;
  align-self: flex-end;
  gap: 2px;
  height: 31px;
`;

const StatusGroup = styled.div`
  display: flex;
  background: #3a4250;
`;

const StatusBtn = styled.button`
  display: flex;
  align-items: center;
  justify-content: center;
  gap: ${(p) => p.$gap || 5}px;
  width: ${(p) => p.$w || 29}px;
  padding-bottom: 2px;
  background: ${(p) => (p.$on ? "#5b88b8" : "transparent")};
  border: solid #3a4250;
  border-width: 1px 1px 0 0;
`;

const compass = <path d="M10 0L13 11L19 19L10 14L1 19L7 11Z" fill="#dfe2e7" />;
const W = { stroke: "#dfe2e7", strokeWidth: 1.3 };

const Status = () => (
  <StatusStrip>
    <LayoutTabs>
      <LayoutTab $w={60} $shift={-18}>布局1</LayoutTab>
      <LayoutTab $w={65}>布局2</LayoutTab>
      <LayoutTab $w={29} aria-label="新建布局"><Icon w={10} h={10}><path d="M5 0V10M0 5H10" stroke="#b9bfc8" strokeWidth="2" /></Icon></LayoutTab>
    </LayoutTabs>
    <StatusBar>
      <StatusGroup><StatusBtn $w={34}>模型</StatusBtn></StatusGroup>
      <StatusGroup>
        <StatusBtn $w={28} aria-label="栅格"><Icon {...W}><path d="M5 1V19M10 1V19M15 1V19M1 5H19M1 10H19M1 15H19" /></Icon></StatusBtn>
        <StatusBtn aria-label="捕捉"><Icon w={16} h={18}>{[1, 6, 11, 16].map((y) => [1, 6, 11, 16].map((x) => <path key={`${x}-${y}`} d={`M${x - 1} ${y}h2v2h-2z`} fill="#dfe2e7" />))}</Icon></StatusBtn>
        <StatusBtn $w={23} aria-label="捕捉选项"><Caret w={9} /></StatusBtn>
      </StatusGroup>
      <StatusGroup>
        <StatusBtn aria-label="正交"><Icon {...W}><path d="M1 0V19H20M1 13H7V19" /></Icon></StatusBtn>
        <StatusBtn $on aria-label="极轴"><Icon {...W}><circle cx="9" cy="11" r="7.500" /><path d="M9 11H20M9 11L16 1" /></Icon></StatusBtn>
        <StatusBtn $w={21} aria-label="极轴选项"><Caret w={9} /></StatusBtn>
        <StatusBtn aria-label="等轴测"><Icon><path d="M2 2L8 9M13 13L19 19" stroke="#a65b62" /><path d="M10 0V20M5 11H15" stroke="#929aa6" /><path d="M8 9h4v4h-4z" fill="#3a4250" stroke={G} /></Icon></StatusBtn>
        <StatusBtn $w={20} aria-label="等轴测选项"><Caret w={9} /></StatusBtn>
        <StatusBtn $w={30} $on aria-label="追踪"><Icon {...W}><path d="M20 18H1L17 2M8 11L12 18" /><path d="M6 9h4v4h-4z" fill="#fff" /></Icon></StatusBtn>
        <StatusBtn $w={30} $on aria-label="对象捕捉"><Icon {...W}><path d="M2 3H18V19H2Z" /><path d="M-1 0h5v5h-5z" fill="#5b88b8" /></Icon></StatusBtn>
        <StatusBtn $w={20} aria-label="对象捕捉选项"><Caret w={9} /></StatusBtn>
      </StatusGroup>
      <StatusGroup><StatusBtn $w={30} aria-label="线宽"><Icon stroke="#dfe2e7"><path d="M0 3H10M0 10H10" strokeWidth="3" /><path d="M0 16.500H10" strokeWidth="5" /><path d="M10 3H20M10 10H20M10 16.500H20" /></Icon></StatusBtn></StatusGroup>
      <StatusGroup>
        <StatusBtn $w={30} $on aria-label="注释可见"><Icon>{compass}<circle cx="17" cy="4" r="3.500" stroke="#dfe2e7" fill="#5b88b8" /></Icon></StatusBtn>
        <StatusBtn $w={31} aria-label="自动缩放"><Icon>{compass}<path d="M17 0L13 6H16L14 11L20 4H17Z" fill="#dfe2e7" stroke="#3a4250" strokeWidth=".6" /></Icon></StatusBtn>
        <StatusBtn $w={29} aria-label="注释"><Icon>{compass}</Icon></StatusBtn>
        <StatusBtn $w={40}>1:1<Caret w={9} /></StatusBtn>
      </StatusGroup>
      <StatusGroup>
        <StatusBtn $w={50} $gap={9} aria-label="设置">
          <Icon>
            <circle cx="10" cy="10" r="5.500" stroke="#dfe2e7" strokeWidth="4" />
            {[0, 45, 90, 135, 180, 225, 270, 315].map((a) => <path key={a} d="M8 0H12V4H8Z" fill="#dfe2e7" transform={`rotate(${a} 10 10)`} />)}
          </Icon>
          <Caret w={9} />
        </StatusBtn>
        <StatusBtn $w={30} aria-label="添加"><Icon><path d="M10 0V20M0 10H20" stroke="#dfe2e7" strokeWidth="2.500" /></Icon></StatusBtn>
      </StatusGroup>
      <StatusGroup><StatusBtn $w={32} aria-label="隔离"><Icon {...W}><path d="M1 1H8V8H1ZM9 12L13 19H5Z" /><circle cx="15.500" cy="9" r="4" /></Icon></StatusBtn></StatusGroup>
      <StatusGroup><StatusBtn $w={2} aria-label="更多" /></StatusGroup>
    </StatusBar>
  </StatusStrip>
);

/* ---------- taskbar ---------- */

const Taskbar = styled.nav`
  display: flex;
  align-items: center;
  justify-content: space-between;
  flex: none;
  height: 61px;
  padding-bottom: 2px;
  border-top: 2px solid #7c2226;
  background: #cde3ea;
  color: #1d2329;
`;

const Apps = styled.div`
  display: flex;
  margin-left: -27px;
`;

const AppButton = styled.button`
  position: relative;
  display: flex;
  align-items: center;
  justify-content: center;
  width: 49px;
  height: 48px;
  margin: 0 3px;
  border-radius: 4px;
  background: ${(p) => (p.$active ? "#e9f3f8" : "transparent")};
  &::after {
    content: "";
    position: absolute;
    bottom: 0;
    width: ${(p) => (p.$active ? 20 : 8)}px;
    height: 4px;
    border-radius: 2px;
    background: ${(p) => (p.$active ? "#1c73b4" : p.$open ? "#71808a" : "transparent")};
  }
`;

const Badge = styled.span`
  position: absolute;
  top: 2px;
  right: 0;
  padding: 0 4px;
  border-radius: 10px;
  background: #f6fafb;
  font-size: 14px;
  line-height: 20px;
`;

const Tray = styled.div`
  display: flex;
  align-items: center;
  button { display: flex; font-size: 18px; }
`;

const TrayCell = styled.span`
  display: flex;
  align-items: center;
  justify-content: center;
  width: ${(p) => p.$w}px;
`;

const Clock = styled.time`
  align-self: flex-end;
  width: 33px;
  margin-left: 16px;
  padding-top: 20px;
  font-size: 14px;
  overflow: hidden;
`;

const Qq = ({ w = 26, h = 32 }) => (
  <Icon w={w} h={h} box="0 0 26 32">
    <ellipse cx="8" cy="30.500" rx="5" ry="1.500" fill="#f5a623" /><ellipse cx="18" cy="30.500" rx="5" ry="1.500" fill="#f5a623" />
    <path d="M4 14Q0 20 1 25Q2 26 4 23ZM22 14Q26 20 25 25Q24 26 22 23Z" fill="#111" />
    <ellipse cx="13" cy="20" rx="10" ry="11" fill="#111" /><ellipse cx="13" cy="22" rx="7.500" ry="8.500" fill="#fff" />
    <ellipse cx="13" cy="9" rx="8.500" ry="9" fill="#111" />
    <ellipse cx="10.500" cy="7" rx="2" ry="3" fill="#fff" /><ellipse cx="15.500" cy="7" rx="2" ry="3" fill="#fff" />
    <circle cx="11" cy="7" r="1" fill="#111" /><circle cx="15" cy="7" r="1" fill="#111" />
    <ellipse cx="13" cy="12" rx="5" ry="1.700" fill="#f5a623" />
    <path d="M4 14Q13 19 22 14L23 17Q13 22 10 19V24H6V18L3 17Z" fill="#e02330" />
  </Icon>
);

const Logo = ({ children }) => <Icon w={30} h={30}>{children}</Icon>;
const logoFont = { fontFamily: "Open Sans, sans-serif", fontWeight: 700 };

const APPS = [
  ["搜索", <Logo><circle cx="15" cy="13" r="11" stroke="#2c3338" strokeWidth="3" /></Logo>],
  ["任务视图", <Logo><path d="M0 9H23V30H0Z" fill="#222b2f" /><path d="M7 1H30V21H7Z" fill="#eef3f4" fillOpacity=".85" /><path d="M7 9H23V21H7Z" fill="#aab2b5" /></Logo>],
  ["天气", <Logo><circle cx="15" cy="16" r="13" fill="url(#sunny)" /><defs><linearGradient id="sunny" x2="0" y2="1"><stop stopColor="#fbb233" /><stop offset="1" stopColor="#e56a17" /></linearGradient></defs></Logo>, "weather"],
  ["联想", <Logo><path d="M15 1L27 4V15Q27 24 15 30Q3 24 3 15V4Z" fill="#2a63d6" /><path d="M15 1L27 4V15Q27 24 15 30Z" fill="#1a4fb8" /><path d="M12 6H17V20H26V24H17Q12 24 12 19Z" fill="#fff" /></Logo>],
  ["文件", <Logo><path d="M0 3H11L14 6H30V14H0Z" fill="#cc8f16" /><path d="M0 9H12L15 6H30V29H0Z" fill="#fbcb43" /><path d="M5 29V24Q5 22 7 22H23Q25 22 25 24V29Z" fill="#1f6fb2" /></Logo>],
  ["Edge", <Logo><circle cx="15" cy="15" r="15" fill="#1b70c4" /><path d="M1 12Q3 0 15 0Q29 0 30 13Q29 20 22 20Q17 19 19 16Q20 9 12 8Q4 8 1 14Z" fill="#41c4a8" /><path d="M1 12Q4 2 14 2Q22 3 24 10Q20 4 12 7Q4 9 2 18Z" fill="#2aa6e0" /><path d="M12 12Q10 24 22 24Q17 25 13 22Q9 17 12 12Z" fill="#0d4f96" /><path d="M14 14Q13 21 20 22Q25 22 28 19Q22 21 19 18Q20 13 17 12Z" fill="#cde3ea" /></Logo>],
  ["商店", <Logo><path d="M9 6V2H21V6" stroke="#3aa0c8" strokeWidth="2" /><path d="M1 6H29V26Q29 30 25 30H5Q1 30 1 26Z" fill="#18406c" /><path d="M9 12H14V17H9Z" fill="#f0623f" /><path d="M15 12H20V17H15Z" fill="#7fba3c" /><path d="M9 18H14V23H9Z" fill="#3aa7ee" /><path d="M15 18H20V23H15Z" fill="#fcc53a" /></Logo>],
  ["浏览器", <Logo><path d="M2 18Q1 2 16 2Q28 3 28 13Q14 12 10 20Q18 24 28 19Q24 29 14 29Q5 28 3 22Q0 21 2 18Z" fill="#22a0de" /><path d="M7 15Q12 7 21 10Q14 11 7 15Z" fill="#cde3ea" /><path d="M10 20Q16 15 28 13L28 15Q18 16 12 21Z" fill="#cde3ea" /></Logo>],
  ["微信", <Logo><path d="M0 0H30V30H0Z" fill="#12a01f" /><ellipse cx="11" cy="12" rx="7.500" ry="6.500" fill="#fff" /><ellipse cx="19.500" cy="18.500" rx="6.500" ry="5.500" fill="#fff" stroke="#12a01f" /><circle cx="8.500" cy="10" r="1" fill="#12a01f" /><circle cx="13.500" cy="10" r="1" fill="#12a01f" /><circle cx="17.500" cy="17" r="1" fill="#12a01f" /><circle cx="22" cy="17" r="1" fill="#12a01f" /></Logo>],
  ["ZY", <Logo><path d="M1 5Q8 1 15 5V29Q8 25 1 29Z" fill="#c94a26" /><path d="M15 5Q22 1 29 5V29Q22 25 15 29Z" fill="#153a70" /><text x="2" y="23" fill="#fff" fontSize="20" {...logoFont}>Z</text><text x="16" y="23" fill="#fff" fontSize="20" {...logoFont}>Y</text></Logo>],
  ["PyCharm", <Logo><path d="M2 2H28V29H2Z" fill="#c9ee45" /><path d="M2 2H20L10 12L2 20Z" fill="#45d678" /><path d="M5 5H25V26H5Z" fill="#050505" /><text x="6" y="16" fill="#fff" fontSize="12" {...logoFont}>PC</text><path d="M7 22H14" stroke="#fff" strokeWidth="1.500" /></Logo>],
  ["MATLAB", <Logo><path d="M0 18L10 12L14 21L8 24Z" fill="#3f8ccb" /><path d="M10 12L14 10L20 1L16 22L8 24Z" fill="#7e3a2c" /><path d="M20 1L29 25L22 21L14 29L11 22Q17 14 20 1Z" fill="#e0692b" /></Logo>],
  ["网易云", <Logo><rect width="30" height="30" rx="4" fill="#cf0a22" /><path d="M20 4Q14 4 15 9L17 17Q17 20 14.500 20Q11 19 12 15Q13 12 17 12Q24 12 24 18Q23 25 15 25Q6 24 6 16Q7 10 12 8" stroke="#fff" strokeWidth="2.200" strokeLinecap="round" /></Logo>],
  ["Chrome", <Logo><circle cx="15" cy="15" r="15" fill="#f6c631" /><path d="M15 15L2 7.500A15 15 0 0 1 28 7.500H15Z" fill="#dc3d31" /><path d="M2 7.500L8.500 19A7.500 7.500 0 0 0 15 22.500L21 19L15 30A15 15 0 0 1 2 7.500" fill="#2e9e4c" /><circle cx="15" cy="15" r="7.500" fill="#fff" /><circle cx="15" cy="15" r="5.800" fill="#2f7ce8" /></Logo>],
  ["QQ", <Qq />],
  ["AutoCAD", <Logo><path d="M0 0H30V30H0Z" fill="#f6e1df" /><path d="M5 26L12 3H19L25 26H19L18 20H12L10 26ZM13 15H17L15 8Z" fill="#b3262b" /></Logo>, "open"],
  ["课堂", <Logo><path d="M15 1L29 12L15 22L1 12Z" fill="#2274e0" /><path d="M1 12L4 10V21L1 22Z" fill="#2274e0" /><path d="M8 20L15 24L22 20V23L15 29L8 23Z" fill="#49bfe8" /><path d="M13 8L19 12L13 16Z" fill="#fff" /></Logo>, "open"],
  ["PowerPoint", <Logo><circle cx="16" cy="15" r="14" fill="#e3623a" /><path d="M16 1A14 14 0 0 1 30 15H16Z" fill="#f79272" /><path d="M0 7H16V23H0Z" fill="#b83a1d" /><text x="3" y="20.500" fill="#fff" fontSize="15" {...logoFont}>P</text></Logo>, "open"],
  ["QQ 会话", <Qq />, "active"],
];

const K = { stroke: "#1d2329", strokeWidth: 1.5 };

const Windows = () => (
  <Taskbar>
    <Apps>
      {APPS.map(([name, logo, state]) => (
        <AppButton key={name} aria-label={name} $open={state === "open"} $active={state === "active"}>
          {logo}
          {state === "weather" && <Badge>18°</Badge>}
        </AppButton>
      ))}
    </Apps>
    <Tray>
      <TrayCell $w={30}><button aria-label="展开"><Icon w={16} h={10} {...K}><path d="M0 9L8 1L16 9" /></Icon></button></TrayCell>
      <TrayCell $w={50}><button aria-label="QQ"><Qq w={17} h={20} /></button></TrayCell>
      <TrayCell $w={30}><button aria-label="麦克风"><Icon w={14} h={20} stroke="#1a6d93" strokeWidth="1.400"><rect x="4" y="1" width="6" height="11" rx="3" fill="#a8d3e6" /><path d="M1 8Q1 15 7 15T13 8M7 15V20" /></Icon></button></TrayCell>
      <TrayCell $w={50}><button>英</button></TrayCell>
      <TrayCell $w={30}><button aria-label="网络"><Icon {...K}><path d="M1 8Q10 -1 19 8M4 11Q10 5 16 11M7 14Q10 11 13 14" /><circle cx="10" cy="17" r="1.500" fill="#1d2329" /></Icon></button></TrayCell>
      <TrayCell $w={30}><button aria-label="音量"><Icon {...K} strokeWidth="1.300"><path d="M1 7H4L9 3V17L4 13H1ZM12 7Q14 10 12 13" /><path d="M15 5Q18 10 15 15M18 3Q21.500 10 18 17" stroke="#93a5ad" /></Icon></button></TrayCell>
      <TrayCell $w={30}><button aria-label="电源"><Icon {...K}><path d="M4 9V16H17V5H9" /><path d="M6 8H15V14H6Z" fill="#1d2329" /><path d="M18 8H20V13H18Z" fill="#1d2329" /><path d="M0 2H6V6H0ZM1 0V2M5 0V2M3 6V10" fill="#1d2329" /></Icon></button></TrayCell>
      <Clock>2022/</Clock>
    </Tray>
  </Taskbar>
);

/* ---------- page ---------- */

const TABS = ["插入", "注释", "参数化", "视图", "管理", "输出", "附加模块", "协作", "精选应用"];

export default function App() {
  return (
    <Shell>
      <Global />
      <TitleBar>
        <QuickAccess>
          <button aria-label="打开"><Icon><path d="M0 2H8L10 4H17V8H0Z" fill="#b9bfc9" /><path d="M4 8H20L16 18H0V10Z" fill="#e2e5ea" /></Icon></button>
          <button aria-label="保存"><Icon><path d="M1 -1H20V20H1Z" fill="#b9bec8" /><path d="M4 -1H17V9H4Z" fill="#f1f2f5" /><path d="M6 14H15V20H6Z" fill="#f1f2f5" /><path d="M8 15V19" stroke="#333" /></Icon></button>
          <button aria-label="另存为"><Icon><path d="M0 -1H17V17H0Z" fill="#b9bec8" /><path d="M3 -1H14V7H3Z" fill="#f1f2f5" /><path d="M3 12H11V17H3Z" fill="#f1f2f5" />{pencilTip(11, 10)}</Icon></button>
          <button aria-label="从设备打开"><Icon><path d="M1 -1H11V19H1Z" stroke="#a6adb9" strokeWidth="1.500" fill="#56606f" /><path d="M8 11H12L13 13H19L17 20H8Z" fill="#f1cf80" /></Icon></button>
          <button aria-label="保存到设备"><Icon><path d="M6 -1H17V19H6Z" stroke="#a6adb9" strokeWidth="1.500" fill="#56606f" /><path d="M1 6H8V3L13 7.500L8 12V9H1Z" fill="#70b8f0" /></Icon></button>
          <button aria-label="打印"><Icon><path d="M4 0H16V7H4Z" fill="#fff" /><path d="M0 6H20V16H0Z" fill="#e7e9ed" /><path d="M3 10H17" stroke="#4a5362" /><path d="M3 12H17V19H3Z" fill="#9edbe8" stroke="#fff" /></Icon></button>
          <button aria-label="撤销"><Icon><path d="M0 10L9 4V8Q18 8 20 16Q16 12 9 12.500V16Z" fill="#e7eaee" /></Icon></button>
          <button aria-label="撤销列表"><Caret w={6} /></button>
          <button aria-label="重做"><Icon><path d="M20 10L11 4V8Q2 8 0 16Q4 12 11 12.500V16Z" fill="#6c7686" /></Icon></button>
          <button aria-label="重做列表"><Caret w={6} fill="#9098a4" /></button>
          <button aria-label="自定义"><Icon w={11} h={10}><path d="M0 0H11V1.500H0ZM1 4H10L5.500 9Z" fill="#e7eaee" /></Icon></button>
        </QuickAccess>
        <DocTitle><span>Autodesk AutoCAD 2020</span><span>精</span></DocTitle>
        <TitleTools>
          <Tool aria-label="展开搜索"><Icon w={5} h={9}><path d="M0 0V9L5 4.500Z" fill="#dfe3ea" /></Icon></Tool>
          <Search aria-label="搜索" placeholder="键入关键字或短语" />
          <Tool $gap={4} aria-label="查找"><Icon><path d="M4 2H8V8L9 18H1V10ZM12 2H16L19 10V18H11V8Z" fill="#e9ebee" /><path d="M8 6H12V11H8Z" fill="#7b8492" /><path d="M2 14H8M12 14H18" stroke="#333" /></Icon></Tool>
          <Tool $gap={10}><Icon><ellipse cx="10" cy="6.500" rx="4.500" ry="5.500" fill="#eef0f2" /><path d="M8 11H12V14L19 17V19H1V17L8 14Z" fill="#eef0f2" /></Icon>登录</Tool>
          <Tool $gap={76} aria-label="登录菜单"><Caret w={6} /></Tool>
          <Tool $gap={12} aria-label="购物车"><Icon><path d="M0 3H4L7 13H17L19 6H5" stroke="#e9ebee" strokeWidth="2" /><path d="M5 6H19L17 11H7Z" fill="#e9ebee" /><circle cx="8" cy="17" r="1.800" fill="#e9ebee" /><circle cx="15" cy="17" r="1.800" fill="#e9ebee" /></Icon></Tool>
          <Tool $gap={10} aria-label="应用"><Icon><path d="M10 3L17 15H3Z" stroke="#cfd5de" strokeWidth="2" /><circle cx="10" cy="3" r="2.500" fill="#cfd5de" /><circle cx="3" cy="15" r="2.500" fill="#cfd5de" /><circle cx="17" cy="15" r="2.500" fill="#cfd5de" /></Icon></Tool>
          <Tool $gap={7} aria-label="应用菜单"><Caret /></Tool>
          <Rule $h={20} $gap={12} $color="#555f6f" />
          <Tool $gap={11} aria-label="帮助"><Icon><circle cx="10" cy="10" r="9" fill="#eef0f4" /><path d="M7 8Q7 5 10 5T13 8Q13 9.500 11.500 10.500Q10 11.500 10 13M10 14.500V16.500" stroke="#2e4478" strokeWidth="2.200" /></Icon></Tool>
          <Tool $gap={10} aria-label="帮助菜单"><Caret /></Tool>
        </TitleTools>
      </TitleBar>
      <ClassTimer><LiveDot />上课中 00:01:38<Icon w={13} h={8}><path d="M1 7L6.500 1.500L12 7" stroke="#444" strokeWidth="1.600" /></Icon></ClassTimer>
      <TabBar>
        <Tab $active>默认</Tab>
        {TABS.map((t) => <Tab key={t}>{t}</Tab>)}
        <RibbonToggle aria-label="最小化功能区">
          <Icon w={18} h={10}><rect width="18" height="10" rx="2" fill="#e7eaee" /><path d="M5 7H13L9 3Z" fill="#2a323c" /></Icon>
          <Caret />
        </RibbonToggle>
      </TabBar>
      <RibbonPanels />
      <Canvas>
        <CadSheet />
        <ViewLabel>[二维线框]</ViewLabel>
        <Banner>精馏塔的<br />PID画法</Banner>
        <SnipOverlay />
        <CommandLine onSubmit={(e) => e.preventDefault()}>
          <CommandGrip>
            <Icon w={6} h={24}>{[1, 5, 9, 13, 17, 21].map((y) => <path key={y} d={`M0 ${y}h2v2h-2zM4 ${y}h2v2h-2z`} fill="#c4c9d0" />)}</Icon>
            <button type="button" aria-label="关闭"><Icon w={12} h={12}><path d="M1 1L11 11M11 1L1 11" stroke="#c4c9d0" strokeWidth="2.200" /></Icon></button>
            <button type="button" aria-label="自定义"><Icon><path d="M2 18L12 8" stroke="#c4c9d0" strokeWidth="3" strokeLinecap="round" /><path d="M12 1Q9 4 11 8T18 8L19 5L16 7L13 6V3L15 0Z" fill="#c4c9d0" /></Icon></button>
          </CommandGrip>
          <CommandBox>
            <Icon w={20} h={16}><path d="M.5.5H19.500V15.500H.5Z" stroke="#606468" fill="#a9abad" /><path d="M0 0H20V4H0Z" fill="#606468" /><path d="M2 6L5 8.500L2 11M6 12H10" stroke="#50545a" /></Icon>
            <Caret w={10} fill="#50545a" />
            <input aria-label="命令" placeholder="键入命令" />
            <Caret w={9} fill="#50545a" up />
          </CommandBox>
        </CommandLine>
      </Canvas>
      <Status />
      <Windows />
      <CountDown>00:30</CountDown>
    </Shell>
  );
}
